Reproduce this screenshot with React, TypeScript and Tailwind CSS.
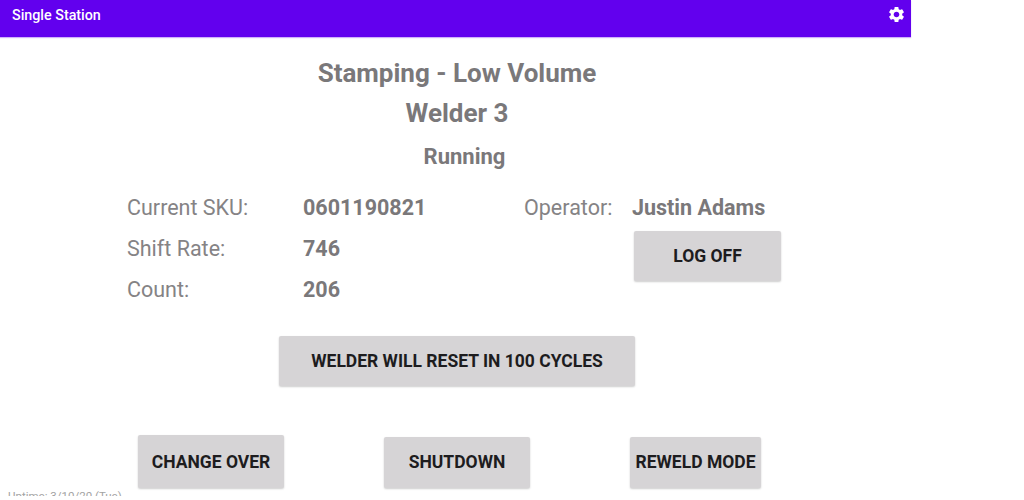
import { MdSettings } from 'react-icons/md';

function Btn({ label, className }: { label: string; className: string }) {
  return (
    <button className={`flex items-center justify-center bg-[#d6d4d6] text-[#1d1c1e] font-bold text-[17.5px] rounded-[2px] shadow-[0_1px_2px_rgba(0,0,0,0.2)] ${className}`}>
      {label}
    </button>
  );
}

function Row({ label, value }: { label: string; value: string }) {
  return (
    <div className="flex h-[41px] items-center pt-[2px]">
      <span className="w-[176px] text-[21.5px] text-[#858385]">{label}</span>
      <span className="text-[21.5px] font-bold text-[#7a787a]">{value}</span>
    </div>
  );
}

export default function App() {
  return (
    <div className="w-[1024px] h-[500px] overflow-hidden bg-white font-['Roboto',sans-serif]">
      <header className="w-[911px] h-[37px] bg-[#6200ee] flex items-center justify-between pl-3 pr-[5px] shadow-[0_1px_1px_rgba(98,0,238,0.3)]">
        <span className="text-white text-[14.3px] font-medium -mt-[6px]">Single Station</span>
        <MdSettings size={19} className="text-white -mt-[8px]" />
      </header>

      <div className="w-[911px] flex flex-col items-center pt-[17px] font-bold text-[#7a787a]">
        <h1 className="h-[38px] flex items-center text-[26px] ml-[3px]">Stamping - Low Volume</h1>
        <h2 className="h-[43px] flex items-center text-[26px] ml-[3px]">Welder 3</h2>
        <h3 className="h-[42px] flex items-center text-[22px] ml-[18px]">Running</h3>
      </div>

      <div className="flex pl-[127px] pt-[10px]">
        <div className="w-[397px] flex flex-col">
          <Row label="Current SKU:" value="0601190821" />
          <Row label="Shift Rate:" value="746" />
          <Row label="Count:" value="206" />
        </div>
        <div className="flex flex-col">
          <div className="flex h-[41px] items-center pt-[2px]">
            <span className="w-[108px] text-[21.5px] text-[#858385]">Operator:</span>
            <span className="text-[21.5px] font-bold text-[#7a787a]">Justin Adams</span>
          </div>
          <Btn label="LOG OFF" className="ml-[110px] mt-[3px] w-[147px] h-[50px]" />
        </div>
      </div>

      <div className="pl-[279px] pt-[26px]">
        <Btn label="WELDER WILL RESET IN 100 CYCLES" className="w-[356px] h-[50px]" />
      </div>

      <div className="flex items-start pl-[138px] pt-[49px]">
        <Btn label="CHANGE OVER" className="w-[146px] h-[53px] pt-[2px]" />
        <Btn label="SHUTDOWN" className="ml-[100px] mt-[2px] w-[146px] h-[51px]" />
        <Btn label="REWELD MODE" className="ml-[100px] mt-[2px] w-[131px] h-[51px]" />
      </div>

      <div className="mt-[2px] h-[6px] overflow-hidden pl-[8px] text-[11.5px] leading-[12px] text-[#a3a3a3]">
        Uptime: 3/10/20 (Tue)
      </div>
    </div>
  );
}
